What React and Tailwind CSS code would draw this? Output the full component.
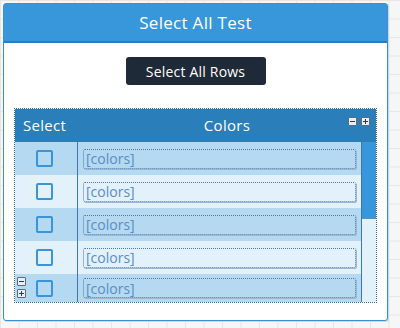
import React from "react";

const rows = [0, 1, 2, 3, 4];

function MiniBox({ sign }) {
  return (
    <span className="flex h-[9px] w-[9px] items-center justify-center rounded-[1px] border border-[#5b6b7b] bg-[#e8eef3]">
      <svg width="7" height="7" viewBox="0 0 7 7">
        <rect x="1" y="3" width="5" height="1" fill="#2b3a4a" />
        {sign === "+" && <rect x="3" y="1" width="1" height="5" fill="#2b3a4a" />}
      </svg>
    </span>
  );
}

export default function App() {
  return (
    <div
      className="h-[328px] w-[400px] overflow-hidden bg-[#f6f6f6] pt-[3px] pl-[3px] font-['Open_Sans',sans-serif]"
      style={{
        backgroundImage:
          "linear-gradient(to right, #e6e6e6 1px, transparent 1px), linear-gradient(to bottom, #e6e6e6 1px, transparent 1px)",
        backgroundSize: "18.5px 18.5px",
      }}
    >
      <div className="flex h-[318px] w-[385px] flex-col rounded-[3px] border border-[#3a8fd0] bg-white shadow-[1px_1px_0_#c9dbe9]">
        {/* Header */}
        <div className="flex h-[39px] items-center justify-center border-b-2 border-[#2b7cbc] bg-[#3897db] text-[17px] tracking-[0.3px] text-white">
          Select All Test
        </div>

        {/* Button */}
        <div className="flex justify-center pt-[14px]">
          <button className="h-[28px] w-[140px] rounded-[3px] bg-[#1e2a38] text-[14px] tracking-[0.2px] text-white">
            Select All Rows
          </button>
        </div>

        {/* Grid */}
        <div className="mx-[10px] mt-[23px] flex flex-col border border-dotted border-[#2a6fa5]">
          <div className="relative flex h-[33px] items-center bg-[#2a7eba] text-[15px] tracking-[0.3px] text-white">
            <div className="w-[63px] pl-[8px]">Select</div>
            <div className="flex-1 text-center">Colors</div>
            <div className="absolute right-[6px] top-[8px] flex gap-[4px]">
              <MiniBox sign="-" />
              <MiniBox sign="+" />
            </div>
          </div>
          <div className="flex">
            <div className="flex-1">
              {rows.map((i) => (
                <div
                  key={i}
                  className={`relative flex items-center ${
                    i % 2 === 0 ? "bg-[#b4d9f1]" : "bg-[#e3f1fb]"
                  } ${i === 4 ? "h-[28px]" : "h-[33px]"}`}
                >
                  {i === 4 && (
                    <div className="absolute left-[2px] top-[3px] flex flex-col gap-[3px]">
                      <MiniBox sign="-" />
                      <MiniBox sign="+" />
                    </div>
                  )}
                  <div className="flex h-full w-[63px] items-center justify-center border-r border-[#3b79ad]">
                    <span className="mr-[3px] h-[17px] w-[17px] rounded-[2px] border-2 border-[#3a94d7]" />
                  </div>
                  <div className="flex-1 pl-[5px] pr-[5px]">
                    <div className="flex h-[20px] items-center rounded-[2px] border border-dotted border-[#4a78ad] pl-[2px] text-[14px] text-[#5b8cc6] shadow-[1px_1px_0_#9fb7cc]">
                      [colors]
                    </div>
                  </div>
                </div>
              ))}
            </div>
            {/* Scrollbar */}
            <div className="flex w-[15px] flex-col border-l border-[#3b79ad] bg-[#e3f1fb]">
              <div className="h-[77px] border-b border-[#5a8fbf] bg-[#3897db]" />
            </div>
          </div>
        </div>
      </div>
    </div>
  );
}
